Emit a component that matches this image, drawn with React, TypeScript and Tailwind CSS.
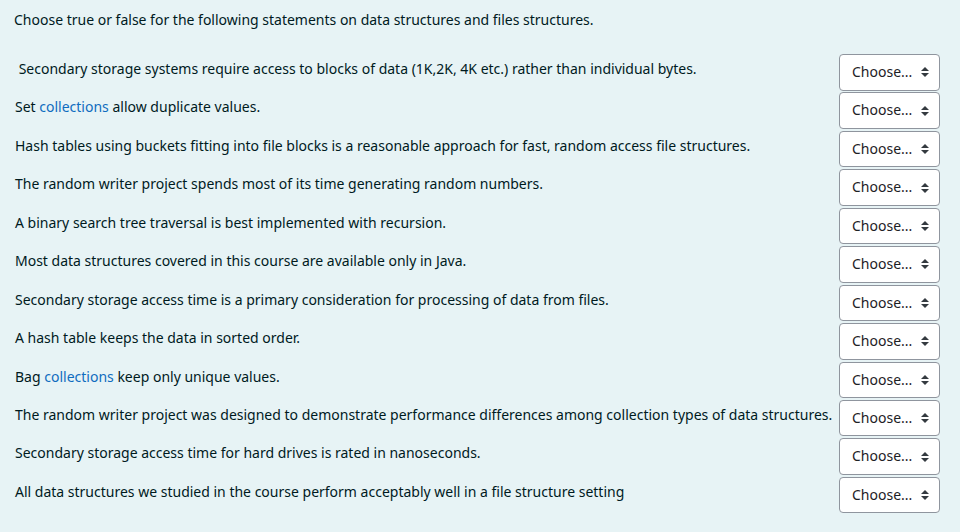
import React from 'react';

const rows: { text: React.ReactNode }[] = [
  { text: '\u00a0Secondary storage systems require access to blocks of data (1K,2K, 4K etc.) rather than individual bytes.' },
  { text: <>Set <span className="text-[#0f6cbf]">collections</span> allow duplicate values.</> },
  { text: 'Hash tables using buckets fitting into file blocks is a reasonable approach for fast, random access file structures.' },
  { text: 'The random writer project spends most of its time generating random numbers.' },
  { text: 'A binary search tree traversal is best implemented with recursion.' },
  { text: 'Most data structures covered in this course are available only in Java.' },
  { text: 'Secondary storage access time is a primary consideration for processing of data from files.' },
  { text: 'A hash table keeps the data in sorted order.' },
  { text: <>Bag <span className="text-[#0f6cbf]">collections</span> keep only unique values.</> },
  { text: 'The random writer project was designed to demonstrate performance differences among collection types of data structures.' },
  { text: 'Secondary storage access time for hard drives is rated in nanoseconds.' },
  { text: 'All data structures we studied in the course perform acceptably well in a file structure setting' },
];

const ChooseSelect = () => (
  <div className="flex items-center justify-between w-[101px] h-[36.5px] pl-[12px] pr-[10px] bg-white border border-[#8f959e] rounded-[4px] text-[14px] text-[#1d2125]">
    <span>Choose...</span>
    <svg width="8" height="10" viewBox="0 0 4 5" className="shrink-0">
      <path d="M2 0L0 2h4zm0 5L0 3h4z" fill="#343a40" />
    </svg>
  </div>
);

export default function App() {
  return (
    <div className="w-[960px] h-[532px] bg-[#e7f3f5] text-[#001a1e] pl-[14px] pr-[20px] pt-[9px] text-[14px] leading-[22.5px] font-['Noto_Sans',sans-serif] overflow-hidden">
      <p>Choose true or false for the following statements on data structures and files structures.</p>
      <div className="mt-[22.5px]">
        {rows.map((row, i) => (
          <div key={i} className="flex items-start h-[38.45px]">
            <div className="flex-1 pl-[1px] pt-[4px] whitespace-nowrap">{row.text}</div>
            <ChooseSelect />
          </div>
        ))}
      </div>
    </div>
  );
}
